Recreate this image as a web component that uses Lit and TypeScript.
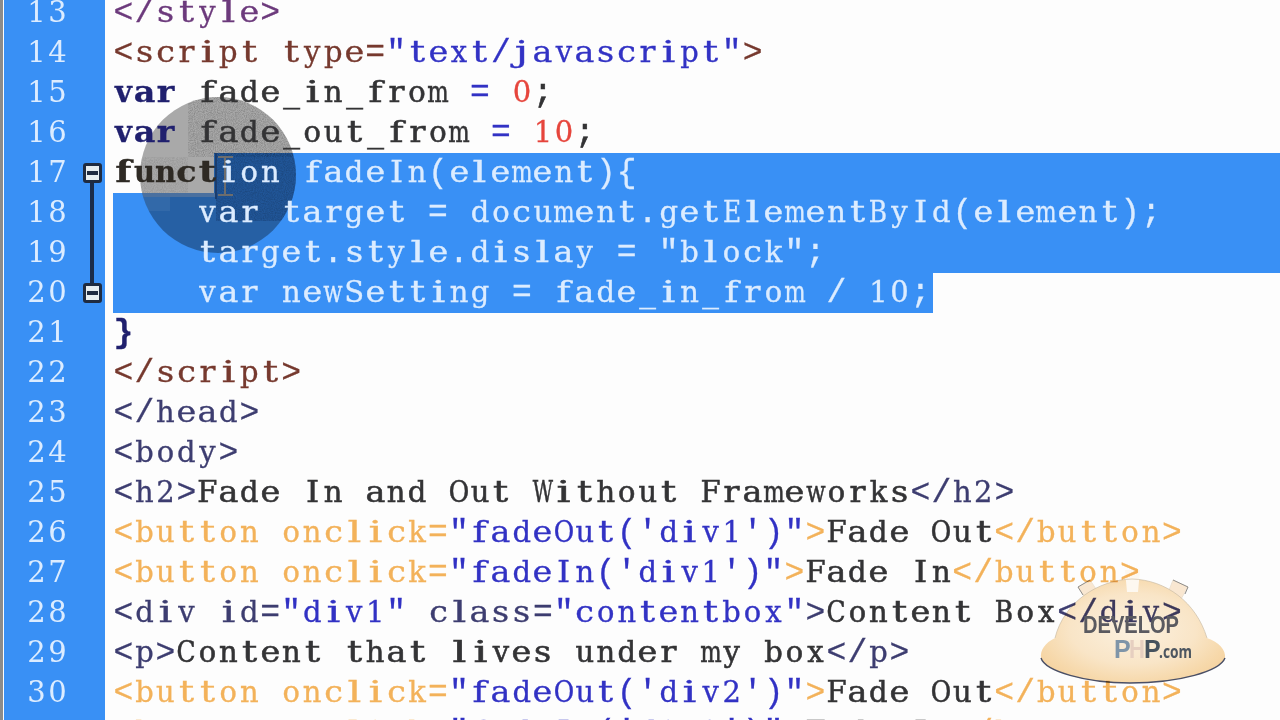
import { LitElement, html, css, nothing } from "lit";
import { customElement } from "lit/decorators.js";

type Seg = [string, string];
interface Line { n: number; segs: Seg[]; sel?: Seg[]; full?: boolean; fold?: string; lead?: boolean }

const btn = (fn: string, d: string, label: string): Seg[] => [
  ["o", "<button onclick="], ["b", `"${fn}('${d}')"`], ["o", ">"], ["d", label], ["o", "</button>"],
];

const LINES: Line[] = [
  { n: 13, segs: [["p", "</style>"]] },
  { n: 14, segs: [["r", "<script type="], ["b", '"text/javascript"'], ["r", ">"]] },
  { n: 15, segs: [["k", "var"], ["d", " fade_in_from "], ["b", "="], ["d", " "], ["m", "0"], ["d", ";"]] },
  { n: 16, segs: [["k", "var"], ["d", " fade_out_from "], ["b", "="], ["d", " "], ["m", "10"], ["d", ";"]] },
  { n: 17, segs: [["f", "funct"]], sel: [["s", "ion fadeIn(element){"]], full: true, fold: "start", lead: true },
  { n: 18, segs: [], sel: [["s", "    var target = document.getElementById(element);"]], full: true, fold: "mid" },
  { n: 19, segs: [], sel: [["s", '    target.style.dislay = "block";']], full: true, fold: "mid" },
  { n: 20, segs: [], sel: [["s", "    var newSetting = fade_in_from / 10;"]], fold: "end" },
  { n: 21, segs: [["k", "}"]] },
  { n: 22, segs: [["r", "</script>"]] },
  { n: 23, segs: [["t", "</head>"]] },
  { n: 24, segs: [["t", "<body>"]] },
  { n: 25, segs: [["t", "<h2>"], ["d", "Fade In and Out Without Frameworks"], ["t", "</h2>"]] },
  { n: 26, segs: btn("fadeOut", "div1", "Fade Out") },
  { n: 27, segs: btn("fadeIn", "div1", "Fade In") },
  { n: 28, segs: [["t", "<div id="], ["b", '"div1"'], ["t", " class="], ["b", '"contentbox"'], ["t", ">"], ["d", "Content Box"], ["t", "</div>"]] },
  { n: 29, segs: [["t", "<p>"], ["d", "Content that lives under my box"], ["t", "</p>"]] },
  { n: 30, segs: btn("fadeOut", "div2", "Fade Out") },
  { n: 31, segs: btn("fadeIn", "div2", "Fade In") },
];

const cellClass = (ch: string) => {
  if (`<>=/"'(){};.`.includes(ch)) return "sym";
  if ("mw".includes(ch)) return "wide";
  if ("WM".includes(ch)) return "xwide";
  if ("ODCGHNBE".includes(ch)) return "cap";
  if ("ilj".includes(ch)) return "thin";
  if ("ft".includes(ch)) return "slim";
  if ("rIsace_".includes(ch)) return "fit";
  return "";
};

@customElement("app-root")
export class AppRoot extends LitElement {
  static styles = css`
    :host { display: block; width: 1280px; height: 720px; overflow: hidden; }
    .editor {
      position: relative; width: 1280px; height: 720px; overflow: hidden;
      background: #fdfdfd; filter: blur(0.5px);
      font: 29px/38px "DejaVu Serif", serif;
      border-left: 3px solid #8c8c8c; box-sizing: border-box;
    }
    .lines { display: flex; flex-direction: column; margin-top: -7px; }
    .row { display: flex; height: 40px; flex: none; }
    .gutter {
      flex: none; width: 101px; margin-left: 1px; background: #3990f5; color: #dcecff;
      display: flex; padding-left: 22px; box-sizing: border-box;
    }
    .num { width: 57px; flex: none; white-space: pre; font-weight: 400; }
    .fold { width: 18px; flex: none; display: flex; flex-direction: column; align-items: center; }
    .bar { width: 4px; background: #1b2c49; flex: 1; }
    .gap { flex: 1; }
    .box {
      flex: none; width: 19px; height: 20px; box-sizing: border-box; border: 3px solid #1f2b40;
      border-radius: 3px; background: #e8eef0; display: flex; align-items: center; justify-content: center;
    }
    .box i { display: block; width: 11px; height: 4px; background: #1f2b40; }
    .code { flex: 1; display: flex; margin-left: 8px; white-space: pre; min-width: 0; }
    .sel { background: #3990f5; padding: 0 2px 0 0; }
    .sel.full { flex: 1; }
    .sel.lead { margin-left: -4px; padding-left: 4px; }
    .seg { position: relative; z-index: 2; -webkit-text-stroke: 0.3px currentColor; }
    .c { display: inline-block; width: 20.98px; text-align: center; }
    .c.sym { font-family: "Liberation Mono", monospace; font-size: 33px; }
    .c.wide { width: 28px; margin: 0 -3.51px; transform: scaleX(0.78); }
    .c.xwide { width: 32px; margin: 0 -5.51px; transform: scaleX(0.68); }
    .c.cap { width: 24px; margin: 0 -1.51px; transform: scaleX(0.86); }
    .c.thin { transform: scaleX(1.5); }
    .c.slim { transform: scaleX(1.3); }
    .c.fit { transform: scaleX(1.15); }
    .seg.d { color: #333335; -webkit-text-stroke: 0.55px currentColor; }
    .f { color: #2e2a24; font-weight: 700; }
    .k { color: #20206e; font-weight: 700; }
    .t { color: #3d3d70; }
    .b { color: #3232c4; }
    .o { color: #f3b25a; }
    .r { color: #76392e; }
    .p { color: #6c3a7c; }
    .m { color: #e6453c; }
    .s { color: #dcecff; }
    .spot {
      position: absolute; z-index: 1; left: 137px; top: 97px; width: 156px; height: 156px;
      display: block;
    }
    .logo {
      position: absolute; z-index: 3; left: 1024px; top: 570px; width: 205px; height: 120px;
      overflow: visible; mix-blend-mode: multiply;
    }
    .logotext { position: absolute; z-index: 4; left: 1024px; top: 570px; width: 205px; height: 120px; overflow: visible; }
    .lt1 { font: 700 23px "Liberation Sans", sans-serif; fill: #5a5a60; }
    .lt2 { font: 700 25px "Liberation Sans", sans-serif; }
    .lt3 { font: 700 17px "Open Sans", sans-serif; fill: #4d5660; }
  `;

  private cells(t: string) {
    return [...t].map((ch) => html`<span class="c ${cellClass(ch)}">${ch}</span>`);
  }

  private segs(list: Seg[]) {
    return list.map(([c, t]) => html`<span class="seg ${c}">${this.cells(t)}</span>`);
  }

  private fold(kind?: string) {
    if (!kind) return html`<div class="fold"></div>`;
    const box = html`<div class="box"><i></i></div>`;
    if (kind === "start") return html`<div class="fold"><div class="gap"></div>${box}<div class="bar"></div></div>`;
    if (kind === "end") return html`<div class="fold"><div class="bar"></div>${box}<div class="gap"></div></div>`;
    return html`<div class="fold"><div class="bar"></div></div>`;
  }

  render() {
    return html`<div class="editor">
      <div class="lines">
        ${LINES.map((l) => html`<div class="row">
          <div class="gutter"><div class="num">${this.cells(String(l.n))}</div>${this.fold(l.fold)}</div>
          <div class="code">
            ${this.segs(l.segs)}
            ${l.sel
              ? html`<div class="sel ${l.full ? "full" : ""} ${l.lead ? "lead" : ""}">${this.segs(l.sel)}</div>`
              : nothing}
          </div>
        </div>`)}
      </div>
      <svg class="spot" viewBox="0 0 156 156">
        <defs>
          <clipPath id="c"><circle cx="78" cy="78" r="78"></circle></clipPath>
          <filter id="n" x="0" y="0" width="100%" height="100%">
            <feTurbulence type="fractalNoise" baseFrequency="0.9" numOctaves="2" seed="4"></feTurbulence>
            <feColorMatrix values="0 0 0 0 0  0 0 0 0 0  0 0 0 0 0  0 0 0 -1.4 0.95"></feColorMatrix>
          </filter>
        </defs>
        <g clip-path="url(#c)">
          <rect width="156" height="156" fill="#000" opacity=".33"></rect>
          <rect x="48" y="0" width="110" height="60" filter="url(#n)" opacity=".28"></rect>
          <rect x="0" y="60" width="48" height="36" filter="url(#n)" opacity=".14"></rect>
          <rect x="76" y="56" width="82" height="68" fill="#001040" opacity=".12"></rect>
          <rect x="76" y="56" width="82" height="68" filter="url(#n)" opacity=".22"></rect>
          <rect x="0" y="96" width="76" height="4" fill="#6d7f99" opacity=".5"></rect>
          <rect x="0" y="100" width="30" height="14" fill="#fff" opacity=".06"></rect>
        </g>
        <rect x="75" y="56" width="2" height="46" fill="#1b3d6d"></rect>
        <path d="M85 61V97M78 98H93M78 60H93" stroke="#6d6d6d" stroke-width="2" fill="none"></path>
      </svg>
      <svg class="logo" viewBox="0 0 205 120">
        <defs>
          <radialGradient id="h" cx=".5" cy=".48" r=".62">
            <stop offset="0" stop-color="#fdf3e2"></stop>
            <stop offset=".55" stop-color="#fbe7c9"></stop>
            <stop offset="1" stop-color="#f7d39c"></stop>
          </radialGradient>
        </defs>
        <path d="M51 17L63 10L79 34L67 42Z" fill="#fbe9d3" stroke="#efe4d4"></path>
        <path d="M146 10L161 17L150 36L139 28Z" fill="#fbe9d3" stroke="#efe4d4"></path>
        <path d="M28 68C37 32 71 10 105 9C139 10 169 32 180 68C192 72 199 80 198 88C193 101 153 113 103 113C58 113 18 101 14 88C13 80 18 73 28 68Z" fill="url(#h)"></path>
        <path d="M98 0H113L111 22H100Z" fill="#fffaf2"></path>
        <path d="M14 88C18 101 58 113 103 113C153 113 193 101 198 88" fill="none" stroke="#4a4f66" stroke-width="1.4"></path>
        <path d="M51 17L63 10M146 10L161 17M51 17L56 25M161 17L158 24" fill="none" stroke="#777" stroke-width=".8"></path>
        <path d="M28 68C37 32 71 10 105 9C139 10 169 32 180 68" fill="none" stroke="#cdbfa8" stroke-width=".7"></path>
      </svg>
      <svg class="logotext" viewBox="0 0 205 120">
        <text class="lt1" x="56" y="63" textLength="96" lengthAdjust="spacingAndGlyphs">DEVELOP</text>
        <text class="lt2" x="87" y="88" fill="#7f95a8">P</text>
        <text class="lt2" x="102" y="88" fill="#e6cfc0" textLength="16" lengthAdjust="spacingAndGlyphs">H</text>
        <text class="lt2" x="117" y="88" fill="#46525e">P</text>
        <text class="lt3" x="132" y="88" textLength="33" lengthAdjust="spacingAndGlyphs">.com</text>
      </svg>
    </div>`;
  }
}
